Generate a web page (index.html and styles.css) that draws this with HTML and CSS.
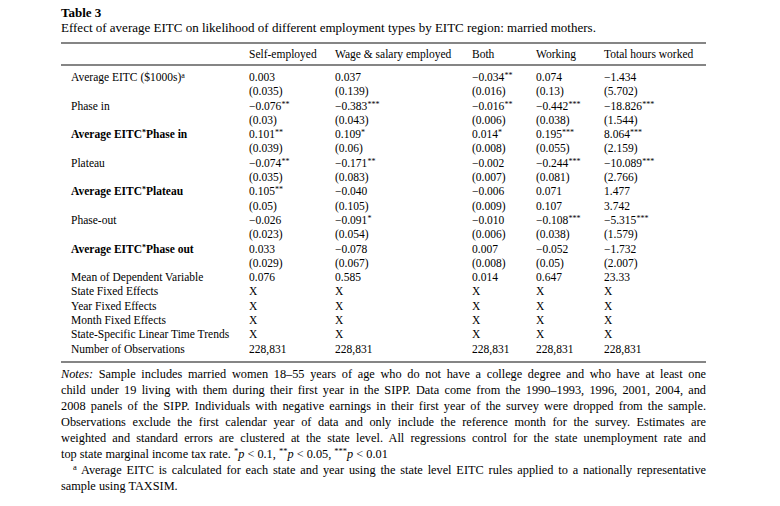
FILE: index.html
```html
<!DOCTYPE html>
<html lang="en">
<head>
<meta charset="utf-8">
<title>Table 3</title>
<link rel="stylesheet" href="styles.css">
</head>
<body>
<div class="page">
  <div class="caption">
    <div class="label">Table 3</div>
    <div class="title">Effect of average EITC on likelihood of different employment types by EITC region: married mothers.</div>
  </div>
  <table class="results">
    <colgroup>
      <col class="c-label"><col class="c-1"><col class="c-2"><col class="c-3"><col class="c-4"><col class="c-5">
    </colgroup>
    <thead>
      <tr><th></th><th>Self-employed</th><th>Wage &amp; salary employed</th><th>Both</th><th>Working</th><th>Total hours worked</th></tr>
    </thead>
    <tbody>
      <tr class="first"><td>Average EITC ($1000s)<sup>a</sup></td><td>0.003</td><td>0.037</td><td>−0.034<sup>**</sup></td><td>0.074</td><td>−1.434</td></tr>
      <tr><td></td><td>(0.035)</td><td>(0.139)</td><td>(0.016)</td><td>(0.13)</td><td>(5.702)</td></tr>
      <tr><td>Phase in</td><td>−0.076<sup>**</sup></td><td>−0.383<sup>***</sup></td><td>−0.016<sup>**</sup></td><td>−0.442<sup>***</sup></td><td>−18.826<sup>***</sup></td></tr>
      <tr><td></td><td>(0.03)</td><td>(0.043)</td><td>(0.006)</td><td>(0.038)</td><td>(1.544)</td></tr>
      <tr><td class="b">Average EITC<sup>*</sup>Phase in</td><td>0.101<sup>**</sup></td><td>0.109<sup>*</sup></td><td>0.014<sup>*</sup></td><td>0.195<sup>***</sup></td><td>8.064<sup>***</sup></td></tr>
      <tr><td></td><td>(0.039)</td><td>(0.06)</td><td>(0.008)</td><td>(0.055)</td><td>(2.159)</td></tr>
      <tr><td>Plateau</td><td>−0.074<sup>**</sup></td><td>−0.171<sup>**</sup></td><td>−0.002</td><td>−0.244<sup>***</sup></td><td>−10.089<sup>***</sup></td></tr>
      <tr><td></td><td>(0.035)</td><td>(0.083)</td><td>(0.007)</td><td>(0.081)</td><td>(2.766)</td></tr>
      <tr><td class="b">Average EITC<sup>*</sup>Plateau</td><td>0.105<sup>**</sup></td><td>−0.040</td><td>−0.006</td><td>0.071</td><td>1.477</td></tr>
      <tr><td></td><td>(0.05)</td><td>(0.105)</td><td>(0.009)</td><td>0.107</td><td>3.742</td></tr>
      <tr><td>Phase-out</td><td>−0.026</td><td>−0.091<sup>*</sup></td><td>−0.010</td><td>−0.108<sup>***</sup></td><td>−5.315<sup>***</sup></td></tr>
      <tr><td></td><td>(0.023)</td><td>(0.054)</td><td>(0.006)</td><td>(0.038)</td><td>(1.579)</td></tr>
      <tr><td class="b">Average EITC<sup>*</sup>Phase out</td><td>0.033</td><td>−0.078</td><td>0.007</td><td>−0.052</td><td>−1.732</td></tr>
      <tr><td></td><td>(0.029)</td><td>(0.067)</td><td>(0.008)</td><td>(0.05)</td><td>(2.007)</td></tr>
      <tr><td>Mean of Dependent Variable</td><td>0.076</td><td>0.585</td><td>0.014</td><td>0.647</td><td>23.33</td></tr>
      <tr><td>State Fixed Effects</td><td>X</td><td>X</td><td>X</td><td>X</td><td>X</td></tr>
      <tr><td>Year Fixed Effects</td><td>X</td><td>X</td><td>X</td><td>X</td><td>X</td></tr>
      <tr><td>Month Fixed Effects</td><td>X</td><td>X</td><td>X</td><td>X</td><td>X</td></tr>
      <tr><td>State-Specific Linear Time Trends</td><td>X</td><td>X</td><td>X</td><td>X</td><td>X</td></tr>
      <tr class="last"><td>Number of Observations</td><td>228,831</td><td>228,831</td><td>228,831</td><td>228,831</td><td>228,831</td></tr>
    </tbody>
  </table>
  <div class="notes">
    <p class="para"><span class="line"><i>Notes:</i> Sample includes married women 18–55 years of age who do not have a college degree and who have at least one</span><span class="line">child under 19 living with them during their first year in the SIPP. Data come from the 1990–1993, 1996, 2001, 2004, and</span><span class="line">2008 panels of the SIPP. Individuals with negative earnings in their first year of the survey were dropped from the sample.</span><span class="line">Observations exclude the first calendar year of data and only include the reference month for the survey. Estimates are</span><span class="line">weighted and standard errors are clustered at the state level. All regressions control for the state unemployment rate and</span><span class="line end">top state marginal income tax rate. <sup>*</sup><i>p</i> &lt; 0.1, <sup>**</sup><i>p</i> &lt; 0.05, <sup>***</sup><i>p</i> &lt; 0.01</span></p>
    <p class="para"><span class="line fn"><sup class="fn-mark">a</sup> Average EITC is calculated for each state and year using the state level EITC rules applied to a nationally representative</span><span class="line end">sample using TAXSIM.</span></p>
  </div>
</div>
</body>
</html>
```

FILE: styles.css
```css
html, body {
  margin: 0;
  padding: 0;
  background: #ffffff;
}

body {
  font-family: "Liberation Serif", "Times New Roman", serif;
  color: #000000;
}

.page {
  width: 645px;
  padding: 5px 0 0 61px;
}

.caption {
  font-size: 13px;
  line-height: 15px;
}

.caption .label {
  font-weight: bold;
  font-size: 13px;
}

.caption .title {
  margin-bottom: 7px;
}

.results {
  width: 645px;
  border-collapse: collapse;
  table-layout: fixed;
  font-size: 11.5px;
  border-top: 2px solid #858585;
  border-bottom: 2px solid #858585;
}

.c-label { width: 188px; }
.c-1 { width: 86px; }
.c-2 { width: 137px; }
.c-3 { width: 64px; }
.c-4 { width: 68px; }
.c-5 { width: 102px; }

.results th {
  font-weight: normal;
  text-align: left;
  padding: 0;
  height: 20px;
  line-height: 20px;
  border-bottom: 2px solid #858585;
  white-space: nowrap;
}

.results td {
  padding: 0;
  height: 14.3px;
  line-height: 14.3px;
  white-space: nowrap;
  text-align: left;
}

.results td:first-child {
  padding-left: 10px;
}

.results tr.first td {
  padding-top: 4px;
}

.results tr.last td {
  padding-bottom: 5px;
}

.results td.b {
  font-weight: bold;
}

.results sup {
  font-size: 8px;
  line-height: 0;
  vertical-align: 3px;
}

.notes {
  margin-top: 3px;
  font-size: 12.3px;
  line-height: 16px;
}

.para {
  margin: 0;
}

.line {
  display: block;
  text-align: justify;
  text-align-last: justify;
}

.line.end {
  text-align-last: left;
}

.line.fn {
  padding-left: 12px;
}

.notes sup {
  font-size: 8.5px;
  line-height: 0;
  vertical-align: 4px;
}
```
